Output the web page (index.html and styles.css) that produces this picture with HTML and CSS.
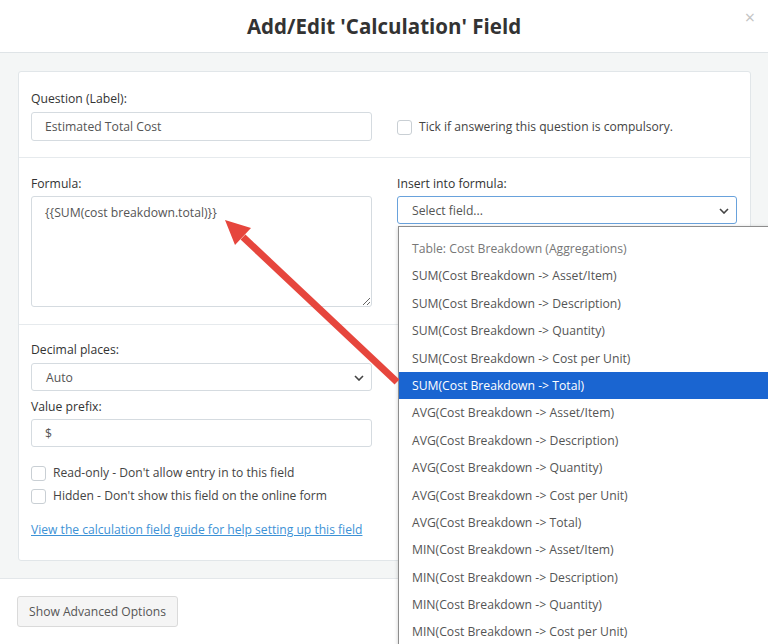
FILE: index.html
```html
<!DOCTYPE html>
<html>
<head>
<meta charset="utf-8">
<link rel="stylesheet" href="styles.css">
</head>
<body>
<div class="modal">
  <div class="header">
    <h1 class="title">Add/Edit 'Calculation' Field</h1>
    <span class="close">×</span>
  </div>
  <div class="body">
    <div class="card">
      <div class="section">
        <div class="row">
          <div class="col">
            <div class="label">Question (Label):</div>
            <div class="input">Estimated Total Cost</div>
          </div>
          <div class="col col-check">
            <label class="check"><span class="box"></span>Tick if answering this question is compulsory.</label>
          </div>
        </div>
      </div>
      <div class="section s2">
        <div class="row">
          <div class="col">
            <div class="label">Formula:</div>
            <textarea class="textarea">{{SUM(cost breakdown.total)}}</textarea>
          </div>
          <div class="col">
            <div class="label">Insert into formula:</div>
            <div class="select focused">Select field...<svg class="chev" viewBox="0 0 10 6" width="10" height="6"><path d="M1 1l4 4 4-4" fill="none" stroke="#444" stroke-width="1.6"/></svg></div>
          </div>
        </div>
      </div>
      <div class="section s3">
        <div class="row">
          <div class="col">
            <div class="label">Decimal places:</div>
            <div class="select sm">Auto<svg class="chev" viewBox="0 0 10 6" width="10" height="6"><path d="M1 1l4 4 4-4" fill="none" stroke="#444" stroke-width="1.6"/></svg></div>
            <div class="label l2">Value prefix:</div>
            <div class="input sm">$</div>
            <div class="checks">
              <label class="check"><span class="box"></span>Read-only - Don't allow entry in to this field</label>
              <label class="check"><span class="box"></span>Hidden - Don't show this field on the online form</label>
            </div>
            <a class="link" href="#">View the calculation field guide for help setting up this field</a>
          </div>
          <div class="col"></div>
        </div>
      </div>
    </div>
  </div>
  <div class="footer">
    <button class="btn">Show Advanced Options</button>
  </div>

  <ul class="dropdown">
    <li class="group">Table: Cost Breakdown (Aggregations)</li>
    <li>SUM(Cost Breakdown -&gt; Asset/Item)</li>
    <li>SUM(Cost Breakdown -&gt; Description)</li>
    <li>SUM(Cost Breakdown -&gt; Quantity)</li>
    <li>SUM(Cost Breakdown -&gt; Cost per Unit)</li>
    <li class="active">SUM(Cost Breakdown -&gt; Total)</li>
    <li>AVG(Cost Breakdown -&gt; Asset/Item)</li>
    <li>AVG(Cost Breakdown -&gt; Description)</li>
    <li>AVG(Cost Breakdown -&gt; Quantity)</li>
    <li>AVG(Cost Breakdown -&gt; Cost per Unit)</li>
    <li>AVG(Cost Breakdown -&gt; Total)</li>
    <li>MIN(Cost Breakdown -&gt; Asset/Item)</li>
    <li>MIN(Cost Breakdown -&gt; Description)</li>
    <li>MIN(Cost Breakdown -&gt; Quantity)</li>
    <li>MIN(Cost Breakdown -&gt; Cost per Unit)</li>
  </ul>

  <svg class="arrow" width="768" height="644" viewBox="0 0 768 644">
    <line x1="397" y1="382" x2="243" y2="237" stroke="#e6463d" stroke-width="7"/>
    <polygon points="225,220 251,228 235,245" fill="#e6463d"/>
  </svg>
</div>
</body>
</html>
```

FILE: styles.css
```css
* { box-sizing: border-box; }
html, body { margin: 0; padding: 0; }
body {
  font-family: "Open Sans", "Liberation Sans", sans-serif;
  color: #333;
  background: #fff;
}
.modal {
  position: relative;
  width: 768px;
  height: 644px;
  overflow: hidden;
  background: #fff;
}
.header {
  position: relative;
  height: 53px;
  border-bottom: 1px solid #dfe4e7;
  text-align: center;
}
.title {
  margin: 0;
  font-size: 20.5px;
  font-weight: 700;
  line-height: 52px;
  color: #333;
}
.close {
  position: absolute;
  right: 13px;
  top: 5px;
  font-size: 18px;
  color: #c4c4c4;
  line-height: 24px;
}
.body {
  background: #f4f6f6;
  padding: 18px 17px 17px 18px;
  border-bottom: 1px solid #e3e7ea;
}
.card {
  background: #fff;
  border: 1px solid #e1e6e9;
  border-radius: 3px;
  height: 490px;
}
.section { padding: 17px 13px 16px 12px; }
.s2 { border-top: 1px solid #e6eaed; padding-top: 16px; padding-bottom: 17px; }
.s3 { border-top: 1px solid #e6eaed; padding-top: 15px; }
.row {
  display: grid;
  grid-template-columns: 341px 340px;
  column-gap: 25px;
}
.label {
  font-size: 12.2px;
  line-height: 20px;
  margin-bottom: 3px;
  color: #333;
}
.s2 .label { margin-bottom: 2px; }
.label.l2 { margin-top: 6px; margin-bottom: 2px; }
.input {
  height: 29px;
  border: 1px solid #d5dbe0;
  border-radius: 3px;
  padding: 0 13px;
  font-size: 12.2px;
  line-height: 28px;
  color: #555;
}
.input.sm { height: 28px; line-height: 27px; }
.col-check { padding-top: 28px; }
.check {
  display: flex;
  align-items: center;
  font-size: 12.1px;
  color: #444;
  line-height: 20px;
  white-space: nowrap;
}
.box {
  width: 15px;
  height: 15px;
  border: 1px solid #c9cfd4;
  border-radius: 3px;
  margin-right: 7px;
  background: #fff;
  flex: none;
}
.textarea {
  display: block;
  width: 341px;
  height: 111px;
  border: 1px solid #d5dbe0;
  border-radius: 3px;
  padding: 6px 13px;
  font-family: "Open Sans", "Liberation Sans", sans-serif;
  font-size: 12.2px;
  line-height: 20px;
  color: #555;
  resize: vertical;
  margin: 0;
}
.select {
  position: relative;
  height: 28px;
  border: 1px solid #d5dbe0;
  border-radius: 3px;
  padding: 0 14px;
  font-size: 12.2px;
  line-height: 27px;
  color: #555;
}
.select.focused { border-color: #69a2dc; }
.select.sm { height: 28px; }
.chev { position: absolute; right: 7px; top: 11px; }
.checks { margin-top: 16px; display: flex; flex-direction: column; gap: 3px; }
.link {
  display: inline-block;
  margin-top: 14px;
  font-size: 12.1px;
  line-height: 20px;
  color: #3d92d6;
  text-decoration: underline;
  white-space: nowrap;
}
.footer { padding: 17px 17px; }
.btn {
  font-family: "Open Sans", "Liberation Sans", sans-serif;
  font-size: 12.1px;
  color: #555;
  background: #f5f5f5;
  border: 1px solid #dadada;
  border-radius: 3px;
  height: 31px;
  width: 161px;
  padding: 0;
}
.dropdown {
  position: absolute;
  left: 398px;
  top: 226px;
  width: 380px;
  height: 430px;
  margin: 0;
  padding: 8px 0 0;
  list-style: none;
  background: #fff;
  border: 1px solid #8d8d8d;
  box-shadow: 0 1px 4px rgba(0,0,0,0.2);
}
.dropdown li {
  height: 27.4px;
  line-height: 27.4px;
  padding-left: 13px;
  font-size: 12.2px;
  color: #555;
  white-space: nowrap;
}
.dropdown li.group { color: #777; }
.dropdown li.active { background: #1a65d1; color: #fff; }
.arrow { position: absolute; left: 0; top: 0; pointer-events: none; }
```
